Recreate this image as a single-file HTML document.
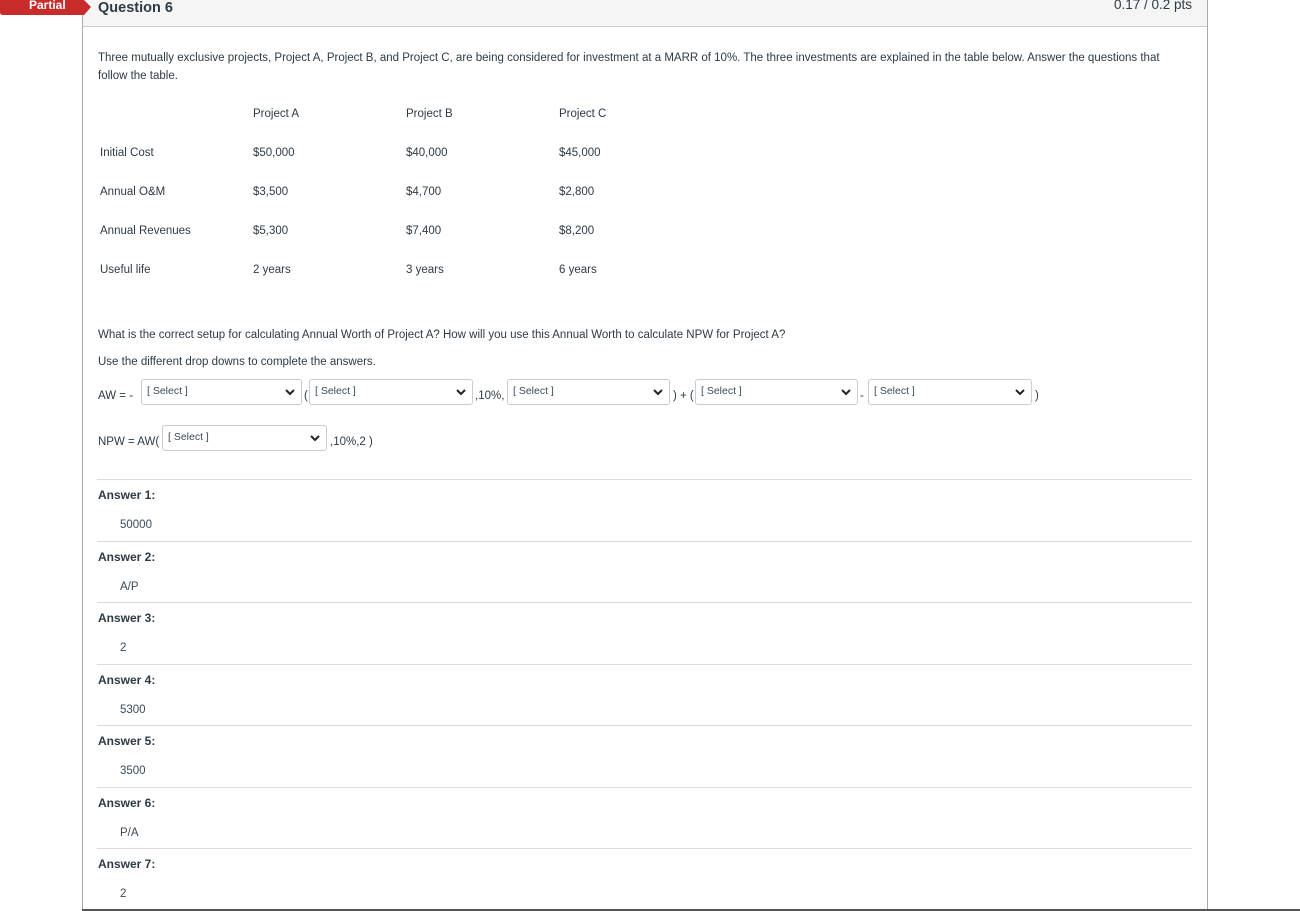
<!DOCTYPE html>
<html><head><style>
body{margin:0;width:1300px;height:911px;position:relative;overflow:hidden;background:#fff;font-family:"Liberation Sans",sans-serif;color:#2d3b45;font-size:11.5px}
.a{position:absolute;white-space:nowrap}
.sel{position:absolute;height:26px;border:1px solid #c7cdd1;border-radius:3px;background:#fff;box-sizing:border-box}
.sel span{position:absolute;left:5px;top:5px;font-size:10.5px;color:#394b58}
.sel svg{position:absolute;right:6px;top:9px}
.hr{position:absolute;left:97px;width:1095px;height:1px;background:#d9dcde}
.al{position:absolute;left:98px;font-size:12px;font-weight:bold;color:#2d3b45}
.av{position:absolute;font-size:11.5px;color:#394b58}
</style></head><body>
<div class="a" style="left:82px;top:0;width:1125px;height:26px;background:#f5f5f5;border-bottom:1px solid #c7cdd1"></div>
<div class="a" style="left:82px;top:0;width:1px;height:911px;background:#aaa"></div>
<div class="a" style="left:1207px;top:0;width:1px;height:911px;background:#aaa"></div>
<div class="a" style="left:82px;top:909px;width:1218px;height:2px;background:#555"></div>
<svg class="a" style="left:0;top:0" width="92" height="16"><path d="M3 0H84L91 7L84 15H3Q0 15 0 12V0Z" fill="#c92b2b"/></svg>
<div class="a" style="left:29px;top:-2px;color:#fff;font-weight:bold;font-size:12px">Partial</div>
<div class="a" style="left:98px;top:0;font-size:14.5px;font-weight:bold;color:#2d3b45">Question 6</div>
<div class="a" style="left:1114px;top:-3px;font-size:13.5px;color:#2d3b45">0.17 / 0.2 pts</div>
<div class="a" style="left:98px;top:49px;font-size:11.5px;line-height:18px;white-space:normal;width:1080px">Three mutually exclusive projects, Project A, Project B, and Project C, are being considered for investment at a MARR of 10%. The three investments are explained in the table below. Answer the questions that follow the table.</div>
<div class="a" style="left:253px;top:108px">Project A</div><div class="a" style="left:406px;top:108px">Project B</div><div class="a" style="left:559px;top:108px">Project C</div>
<div class="a" style="left:100px;top:147px">Initial Cost</div><div class="a" style="left:253px;top:147px">$50,000</div><div class="a" style="left:406px;top:147px">$40,000</div><div class="a" style="left:559px;top:147px">$45,000</div>
<div class="a" style="left:100px;top:186px">Annual O&amp;M</div><div class="a" style="left:253px;top:186px">$3,500</div><div class="a" style="left:406px;top:186px">$4,700</div><div class="a" style="left:559px;top:186px">$2,800</div>
<div class="a" style="left:100px;top:225px">Annual Revenues</div><div class="a" style="left:253px;top:225px">$5,300</div><div class="a" style="left:406px;top:225px">$7,400</div><div class="a" style="left:559px;top:225px">$8,200</div>
<div class="a" style="left:100px;top:264px">Useful life</div><div class="a" style="left:253px;top:264px">2 years</div><div class="a" style="left:406px;top:264px">3 years</div><div class="a" style="left:559px;top:264px">6 years</div>
<div class="a" style="left:98px;top:329px">What is the correct setup for calculating Annual Worth of Project A? How will you use this Annual Worth to calculate NPW for Project A?</div>
<div class="a" style="left:98px;top:356px">Use the different drop downs to complete the answers.</div>
<div class="a" style="left:98px;top:390px">AW = -</div>
<div class="sel" style="left:141px;top:379px;width:161px"><span>[ Select ]</span><svg width="10" height="7"><path d="M1 1L5 5L9 1" stroke="#222" stroke-width="2" fill="none"/></svg></div>
<div class="a" style="left:304px;top:390px">(</div>
<div class="sel" style="left:309px;top:379px;width:164px"><span>[ Select ]</span><svg width="10" height="7"><path d="M1 1L5 5L9 1" stroke="#222" stroke-width="2" fill="none"/></svg></div>
<div class="a" style="left:475px;top:390px">,10%,</div>
<div class="sel" style="left:507px;top:379px;width:163px"><span>[ Select ]</span><svg width="10" height="7"><path d="M1 1L5 5L9 1" stroke="#222" stroke-width="2" fill="none"/></svg></div>
<div class="a" style="left:673px;top:390px">) + (</div>
<div class="sel" style="left:695px;top:379px;width:163px"><span>[ Select ]</span><svg width="10" height="7"><path d="M1 1L5 5L9 1" stroke="#222" stroke-width="2" fill="none"/></svg></div>
<div class="a" style="left:860px;top:390px">-</div>
<div class="sel" style="left:868px;top:379px;width:164px"><span>[ Select ]</span><svg width="10" height="7"><path d="M1 1L5 5L9 1" stroke="#222" stroke-width="2" fill="none"/></svg></div>
<div class="a" style="left:1035px;top:390px">)</div>
<div class="a" style="left:98px;top:436px">NPW = AW(</div>
<div class="sel" style="left:162px;top:425px;width:165px"><span>[ Select ]</span><svg width="10" height="7"><path d="M1 1L5 5L9 1" stroke="#222" stroke-width="2" fill="none"/></svg></div>
<div class="a" style="left:330px;top:436px">,10%,2 )</div>
<div class="hr" style="top:479px"></div><div class="al" style="top:488px">Answer 1:</div><div class="av" style="left:120px;top:519px">50000</div>
<div class="hr" style="top:541px"></div><div class="al" style="top:550px">Answer 2:</div><div class="av" style="left:120px;top:581px">A/P</div>
<div class="hr" style="top:602px"></div><div class="al" style="top:611px">Answer 3:</div><div class="av" style="left:120px;top:642px">2</div>
<div class="hr" style="top:664px"></div><div class="al" style="top:673px">Answer 4:</div><div class="av" style="left:120px;top:704px">5300</div>
<div class="hr" style="top:725px"></div><div class="al" style="top:734px">Answer 5:</div><div class="av" style="left:120px;top:765px">3500</div>
<div class="hr" style="top:787px"></div><div class="al" style="top:796px">Answer 6:</div><div class="av" style="left:120px;top:827px">P/A</div>
<div class="hr" style="top:848px"></div><div class="al" style="top:857px">Answer 7:</div><div class="av" style="left:120px;top:888px">2</div>
</body></html>
